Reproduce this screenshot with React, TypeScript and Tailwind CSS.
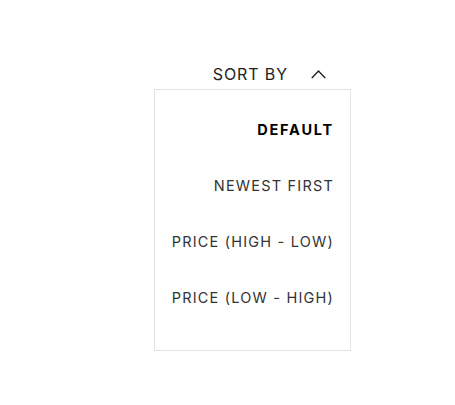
export default function App() {
  const items = [
    { label: "DEFAULT", active: true },
    { label: "NEWEST FIRST", active: false },
    { label: "PRICE (HIGH - LOW)", active: false },
    { label: "PRICE (LOW - HIGH)", active: false },
  ];
  return (
    <div className="w-[455px] h-[405px] bg-white pl-[154px] pt-[59px]" style={{ fontFamily: "Inter, 'DejaVu Sans', sans-serif" }}>
      <div className="w-[197px]">
        <div className="h-[30px] flex items-center justify-end pr-[25px]">
          <span className="text-[16px] tracking-[0.9px] text-[#222] leading-none">SORT BY</span>
          <svg className="ml-[23px]" width="15" height="10" viewBox="0 0 15 10" fill="none">
            <path d="M0.8 9 L7.5 2 L14.2 9" stroke="#222" strokeWidth="1.4" />
          </svg>
        </div>
        <ul className="border border-[#e3e3e3] pt-3 pb-6 pr-[16px]">
          {items.map((it) => (
            <li
              key={it.label}
              className={`h-[56px] flex items-center justify-end text-[14.5px] leading-none ${
                it.active ? "font-bold text-black tracking-[1.8px]" : "font-normal text-[#333] tracking-[1.2px]"
              }`}
            >
              {it.label}
            </li>
          ))}
        </ul>
      </div>
    </div>
  );
}
